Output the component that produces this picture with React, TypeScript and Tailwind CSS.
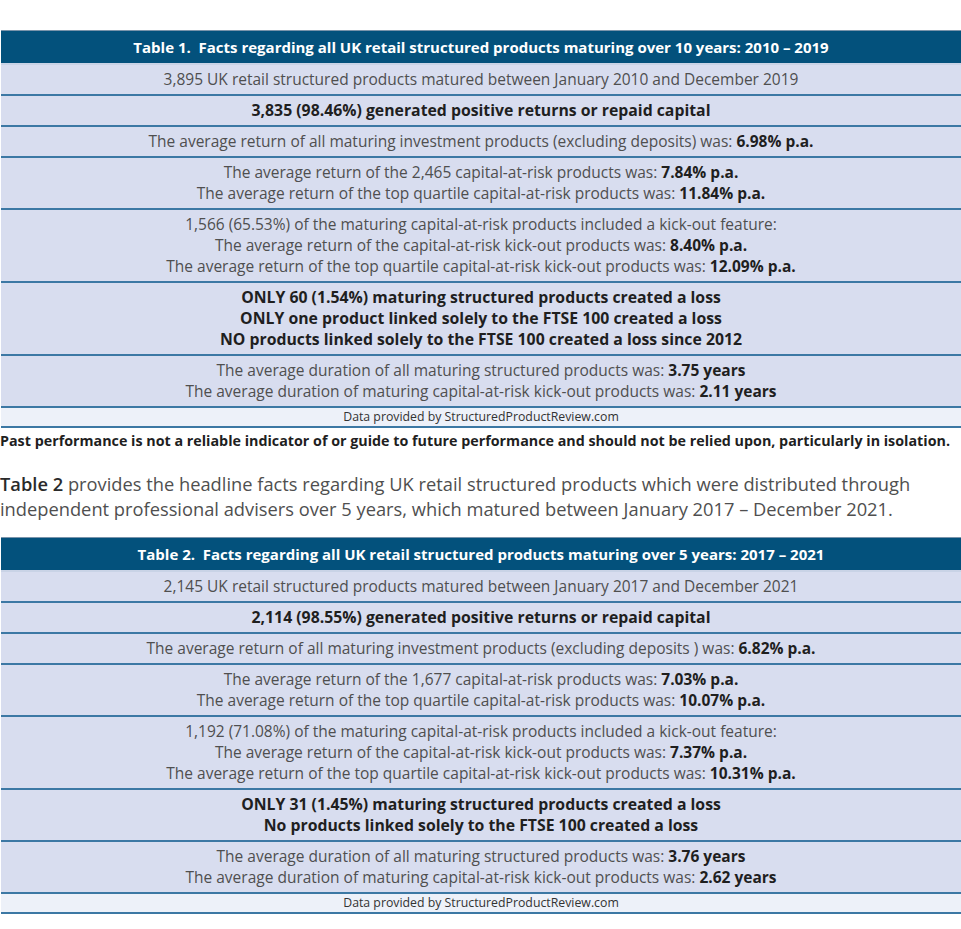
import React from 'react';

type Line = React.ReactNode;

interface Row {
  lines: Line[];
  bold?: boolean;
}

interface FactsTable {
  title: string;
  rows: Row[];
}

const B: React.FC<{ children: React.ReactNode }> = ({ children }) => (
  <span className="font-bold text-[#1f1f1f]">{children}</span>
);

const table1: FactsTable = {
  title: 'Table 1.\u00a0 Facts regarding all UK retail structured products maturing over 10 years: 2010 \u2013 2019',
  rows: [
    { lines: ['3,895 UK retail structured products matured between January 2010 and December 2019'] },
    { lines: ['3,835 (98.46%) generated positive returns or repaid capital'], bold: true },
    { lines: [<>The average return of all maturing investment products (excluding deposits) was: <B>6.98% p.a.</B></>] },
    {
      lines: [
        <>The average return of the 2,465 capital-at-risk products was: <B>7.84% p.a.</B></>,
        <>The average return of the top quartile capital-at-risk products was: <B>11.84% p.a.</B></>,
      ],
    },
    {
      lines: [
        '1,566 (65.53%) of the maturing capital-at-risk products included a kick-out feature:',
        <>The average return of the capital-at-risk kick-out products was: <B>8.40% p.a.</B></>,
        <>The average return of the top quartile capital-at-risk kick-out products was: <B>12.09% p.a.</B></>,
      ],
    },
    {
      lines: [
        'ONLY 60 (1.54%) maturing structured products created a loss',
        'ONLY one product linked solely to the FTSE 100 created a loss',
        'NO products linked solely to the FTSE 100 created a loss since 2012',
      ],
      bold: true,
    },
    {
      lines: [
        <>The average duration of all maturing structured products was: <B>3.75 years</B></>,
        <>The average duration of maturing capital-at-risk kick-out products was: <B>2.11 years</B></>,
      ],
    },
  ],
};

const table2: FactsTable = {
  title: 'Table 2.\u00a0 Facts regarding all UK retail structured products maturing over 5 years: 2017 \u2013 2021',
  rows: [
    { lines: ['2,145 UK retail structured products matured between January 2017 and December 2021'] },
    { lines: ['2,114 (98.55%) generated positive returns or repaid capital'], bold: true },
    { lines: [<>The average return of all maturing investment products (excluding deposits ) was: <B>6.82% p.a.</B></>] },
    {
      lines: [
        <>The average return of the 1,677 capital-at-risk products was: <B>7.03% p.a.</B></>,
        <>The average return of the top quartile capital-at-risk products was: <B>10.07% p.a.</B></>,
      ],
    },
    {
      lines: [
        '1,192 (71.08%) of the maturing capital-at-risk products included a kick-out feature:',
        <>The average return of the capital-at-risk kick-out products was: <B>7.37% p.a.</B></>,
        <>The average return of the top quartile capital-at-risk kick-out products was: <B>10.31% p.a.</B></>,
      ],
    },
    {
      lines: [
        'ONLY 31 (1.45%) maturing structured products created a loss',
        'No products linked solely to the FTSE 100 created a loss',
      ],
      bold: true,
    },
    {
      lines: [
        <>The average duration of all maturing structured products was: <B>3.76 years</B></>,
        <>The average duration of maturing capital-at-risk kick-out products was: <B>2.62 years</B></>,
      ],
    },
  ],
};

const Facts: React.FC<{ table: FactsTable }> = ({ table }) => (
  <div className="ml-px border-t border-[#7a94ab]">
    {/* Header */}
    <div className="h-[34px] bg-[#03517c] flex items-center justify-center text-white font-bold text-[15px] border-b-2 border-[#c9d3e6]">
      {table.title}
    </div>

    {/* Rows */}
    {table.rows.map((row, i) => (
      <div
        key={i}
        className={`bg-[#d8ddef] py-1 text-center leading-[21px] border-b-2 border-[#3c78a4] ${
          row.bold ? 'font-bold text-[15.8px] text-[#1f1f1f]' : 'text-[15.5px] text-[#4f4f4f]'
        }`}
      >
        {row.lines.map((line, j) => (
          <div key={j}>{line}</div>
        ))}
      </div>
    ))}

    {/* Source */}
    <div className="bg-[#edf1f9] text-center text-[12.3px] leading-[18px] text-[#333] border-b-2 border-[#3c78a4]">
      Data provided by StructuredProductReview.com
    </div>
  </div>
);

const App: React.FC = () => {
  return (
    <div
      className="w-[961px] min-h-[929px] bg-white pt-[30px] overflow-hidden"
      style={{ fontFamily: '"Open Sans", Lato, sans-serif' }}
    >
      <Facts table={table1} />

      <p className="mt-[3px] text-[14.3px] leading-[20px] font-bold text-[#1f1f1f] whitespace-nowrap">
        Past performance is not a reliable indicator of or guide to future performance and should not be relied upon, particularly in isolation.
      </p>

      <p className="mt-[20px] text-[18.3px] leading-[25px] text-[#4f4f4f] whitespace-nowrap">
        <span className="font-semibold text-[#2a2a2a]">Table 2</span> provides the headline facts regarding UK retail structured products which were distributed through
        <br />
        independent professional advisers over 5 years, which matured between January 2017 – December 2021.
      </p>

      <div className="mt-[16px]">
        <Facts table={table2} />
      </div>
    </div>
  );
};

export default App;
